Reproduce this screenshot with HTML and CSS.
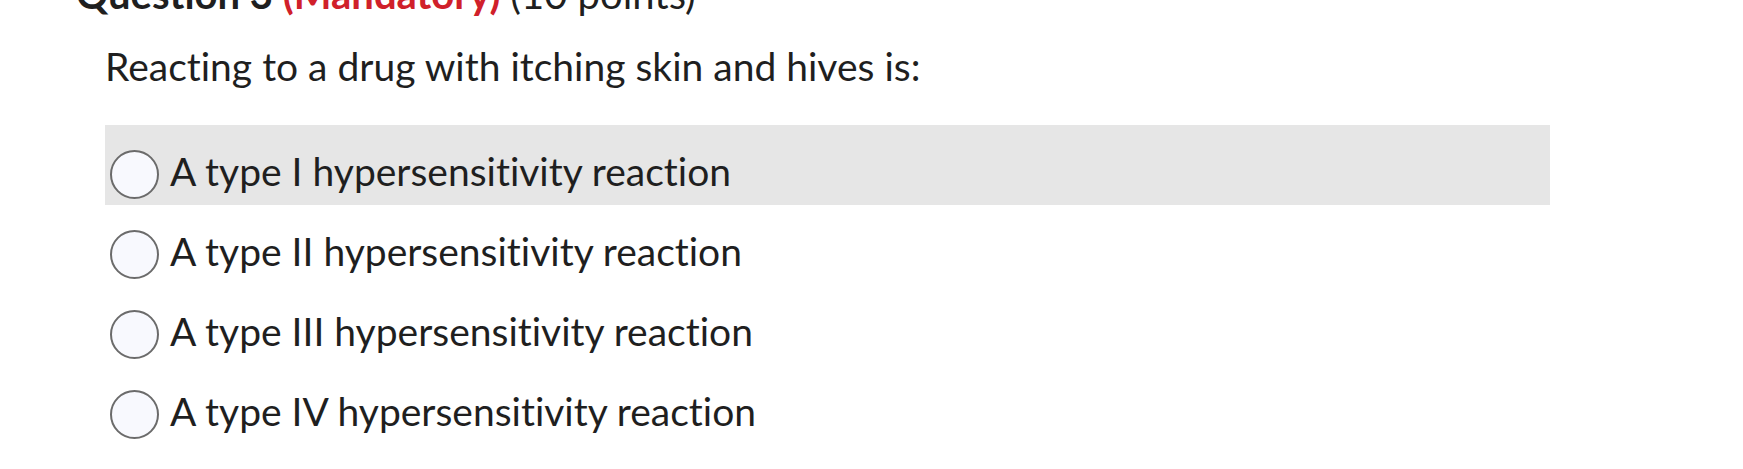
FILE: index.html
```html
<!DOCTYPE html>
<html lang="en">
<head>
<meta charset="utf-8">
<title>Question 3</title>
<link rel="stylesheet" href="styles.css">
</head>
<body>
<div class="page">
  <h2 class="heading">Question 3 <span class="req">(Mandatory)</span> <span class="pts">(10 points)</span></h2>
  <p class="question">Reacting to a drug with itching skin and hives is:</p>
  <div class="options" role="radiogroup">
    <label class="option hover"><span class="radio"></span><span class="label">A type I hypersensitivity reaction</span></label>
    <label class="option"><span class="radio"></span><span class="label">A type II hypersensitivity reaction</span></label>
    <label class="option"><span class="radio"></span><span class="label">A type III hypersensitivity reaction</span></label>
    <label class="option"><span class="radio"></span><span class="label">A type IV hypersensitivity reaction</span></label>
  </div>
</div>
</body>
</html>
```
FILE: styles.css
```css
html, body {
  margin: 0;
  padding: 0;
  background: #ffffff;
}
body {
  font-family: Lato, "Noto Sans", sans-serif;
  color: #1f1f1f;
  font-variant-ligatures: none;
  font-feature-settings: "liga" 0, "clig" 0;
  overflow: hidden;
}
.page {
  display: flex;
  flex-direction: column;
}
.heading {
  margin: -30px 0 0 0;
  padding-left: 76px;
  font-size: 40px;
  line-height: 48px;
  font-weight: 700;
  color: #1f1f1f;
  white-space: nowrap;
}
.req {
  color: #d0202a;
}
.pts {
  font-weight: 400;
}
.question {
  margin: 24px 0 0 0;
  padding-left: 105px;
  font-size: 39px;
  line-height: 48px;
}
.options {
  margin: 35px 0 0 105px;
  width: 1445px;
  display: flex;
  flex-direction: column;
}
.option {
  box-sizing: border-box;
  height: 80px;
  padding: 22px 0 0 5px;
  display: flex;
  align-items: flex-start;
  gap: 11px;
}
.option.hover {
  background: #e6e6e6;
}
.radio {
  box-sizing: border-box;
  flex: none;
  width: 49px;
  height: 49px;
  margin-top: 3px;
  border-radius: 50%;
  border: 2px solid #6b6b6b;
  background: #f8f9fe;
}
.label {
  font-size: 39px;
  line-height: 48px;
}
```
